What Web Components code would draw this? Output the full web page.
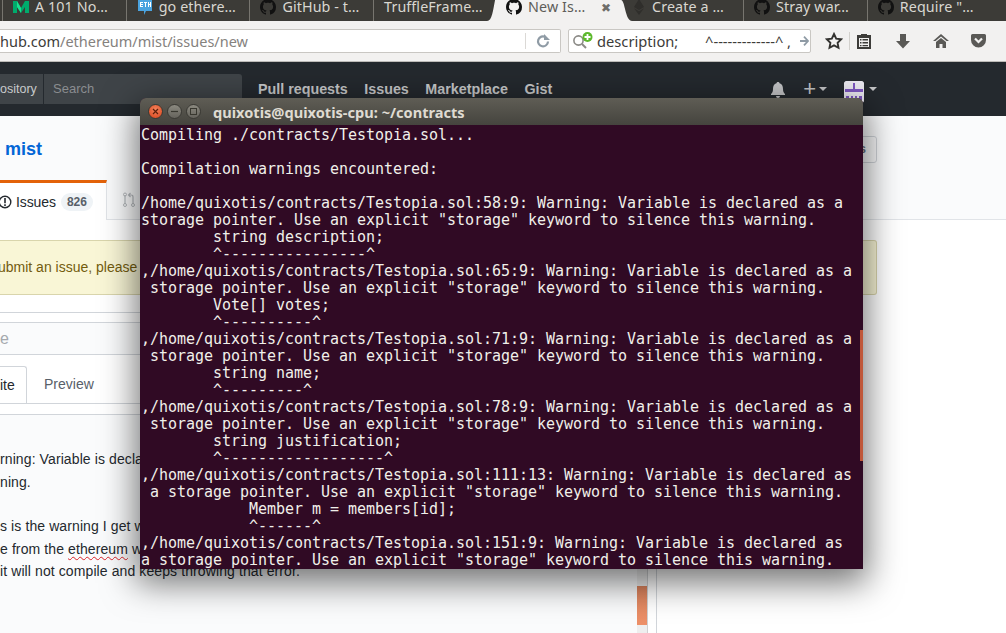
<!DOCTYPE html>
<html>
<head>
<meta charset="utf-8">
<style>
    html, body { margin: 0; height: 633px; overflow: hidden; background: #fff; }
    body { position: relative; font-family: "Liberation Sans", sans-serif; }
</style>
</head>
<body>
<browser-tabs>
    <browser-tab icon="medium">A 101 No…</browser-tab>
    <browser-tab icon="eth">go ethere…</browser-tab>
    <browser-tab icon="github">GitHub - t…</browser-tab>
    <browser-tab class="short">TruffleFrame…</browser-tab>
    <browser-tab icon="github" active>New Is…</browser-tab>
    <browser-tab icon="diamond" class="after">Create a …</browser-tab>
    <browser-tab icon="github">Stray war…</browser-tab>
    <browser-tab icon="github">Require "…</browser-tab>
</browser-tabs>
<nav-toolbar></nav-toolbar>
<gh-header></gh-header>
<gh-repohead></gh-repohead>
<issue-form></issue-form>
<terminal-window></terminal-window>

<script>
const OCTOCAT = 'M8 0C3.58 0 0 3.58 0 8c0 3.54 2.29 6.53 5.47 7.59.4.07.55-.17.55-.38 0-.19-.01-.82-.01-1.49-2.01.37-2.53-.49-2.69-.94-.09-.23-.48-.94-.82-1.13-.28-.15-.68-.52-.01-.53.63-.01 1.08.58 1.23.82.72 1.21 1.87.87 2.33.66.07-.52.28-.87.51-1.07-1.78-.2-3.64-.89-3.64-3.95 0-.87.31-1.59.82-2.15-.08-.2-.36-1.02.08-2.12 0 0 .67-.21 2.2.82.64-.18 1.32-.27 2-.27.68 0 1.36.09 2 .27 1.53-1.04 2.2-.82 2.2-.82.44 1.1.16 1.92.08 2.12.51.56.82 1.27.82 2.15 0 3.07-1.87 3.75-3.65 3.95.29.25.54.73.54 1.48 0 1.07-.01 1.93-.01 2.2 0 .21.15.46.55.38A8.013 8.013 0 0 0 16 8c0-4.42-3.58-8-8-8z';

const TAB_ICONS = {
    medium: `<svg width="16" height="16" viewBox="0 0 16 16"><path fill="#00ab6c" d="M0 2h4l4 7 4-7h4v12h-4V8l-4 6-4-6v6H0z"/><path fill="#1be08f" d="M4 2l4 7v5L4 8z"/></svg>`,
    eth: `<svg width="16" height="18" viewBox="0 0 16 18"><path fill="#4aa3df" d="M1 0h14v13H9l-2 4v-4H1z"/><path fill="#fff" d="M3 4h3v1H4v1h2v1H4v1h2v1H3zM7 4h3v1H9v4H8V5H7zM11 4h1v2h1V4h1v5h-1V7h-1v2h-1z"/></svg>`,
    github: `<svg width="16" height="16" viewBox="0 0 16 16"><path fill="#111" d="${OCTOCAT}"/></svg>`,
    diamond: `<svg width="14" height="16" viewBox="0 0 14 16"><path fill="#2f2e2b" d="M7 0l5 8-5 3-5-3zM7 12.2L12 9.2 7 16 2 9.2z"/></svg>`
};

class BrowserTabs extends HTMLElement {

    constructor() {
        super();
        this.shadow = this.attachShadow({ mode: 'open' });
    }

    connectedCallback() {
        this.shadow.innerHTML = `
        <style>
            :host { display: flex; height: 21px; padding-left: 2px; background: #3c3b37; overflow: hidden; }
        </style>
        <slot></slot>`;
    }
}

class BrowserTab extends HTMLElement {

    constructor() {
        super();
        this.shadow = this.attachShadow({ mode: 'open' });
    }

    connectedCallback() {
        const icon = TAB_ICONS[this.getAttribute('icon')] || '';
        const close = this.hasAttribute('active') ? '<span class="close">✖</span>' : '';
        this.shadow.innerHTML = `
        <style>
            :host {
                display: flex; align-items: center; gap: 6px; box-sizing: border-box;
                width: 123.7px; height: 21px; padding: 0 0 8px 10px; flex: none;
                border-left: 1px solid #77756f; overflow: hidden;
                font: 14.3px "Noto Sans", sans-serif; letter-spacing: .1px; color: #d9d7d1; white-space: nowrap;
            }
            :host(.short) { width: 114px; }
            :host([active]) {
                width: 145px; padding-left: 19px; border-left: 0; color: #5e5d59; background: #f2f1f0;
                clip-path: path('M8 0 H134 C138 0 138 21 145 21 H0 C5 21 6 10 8 0Z');
            }
            :host(.after) { width: 111px; padding-left: 0; border-left: 0; }
            svg { flex: none; display: block; }
            .close { position: absolute; left: 601px; top: -1px; font-size: 12px; color: #6e6d69; }
        </style>
        ${icon}<span><slot></slot></span>${close}`;
    }
}

class NavToolbar extends HTMLElement {

    constructor() {
        super();
        this.shadow = this.attachShadow({ mode: 'open' });
    }

    connectedCallback() {
        this.shadow.innerHTML = `
        <style>
            :host {
                display: flex; align-items: center; box-sizing: border-box; height: 41px; padding: 0 0 1px 0;
                background: #f2f1f0; border-bottom: 1px solid #bdbbb8;
                font: 14.5px "Noto Sans", sans-serif; color: #3d3c39;
            }
            .url, .search {
                display: flex; align-items: center; box-sizing: border-box; height: 24px;
                background: #fff; border: 1px solid #c9c7c3; white-space: nowrap;
            }
            .url { width: 561px; border-left: 0; border-radius: 0 2px 2px 0; }
            .url .address { flex: 1; overflow: hidden; }
            .url .path { color: #85827e; }
            .url .reload { width: 33px; height: 16px; border-left: 1px solid #dbd9d6; display: flex; justify-content: center; margin-right: 1px; }
            .search { width: 243px; margin-left: 7px; border-radius: 2px; gap: 4px; }
            .search .query { flex: 1; overflow: hidden; white-space: pre; font-size: 14.7px; }
            .star { width: 26px; margin-left: 10px; display: flex; justify-content: center; }
            .divider { width: 1px; height: 18px; margin-left: 2px; background: #d3d1cd; }
            .action { width: 30px; margin-right: 8px; display: flex; justify-content: center; }
            svg { display: block; flex: none; }
        </style>
        <div class="url">
            <div class="address">hub.com<span class="path">/ethereum/mist/issues/new</span></div>
            <div class="reload"><svg width="16" height="16" viewBox="0 0 16 16"><path fill="none" stroke="#8f9ba5" stroke-width="2.2" d="M13 8.5A5 5 0 1 1 10.5 4"/><path fill="#8f9ba5" d="M9 1v6h6z"/></svg></div>
        </div>
        <div class="search">
            <svg width="22" height="20" viewBox="0 0 22 20" style="margin-left:2px"><circle cx="7.5" cy="9.5" r="4.6" fill="none" stroke="#8b8a86" stroke-width="1.6"/><path stroke="#8b8a86" stroke-width="2" d="M11 13l4 4"/><circle cx="16.5" cy="6" r="5" fill="#5cb82c"/><path stroke="#fff" stroke-width="1.8" d="M16.5 3v6M13.5 6h6"/></svg>
            <div class="query">description;       ^-------------^ ,</div>
            <svg width="9" height="10" viewBox="0 0 9 10" style="margin-right:1px"><path fill="none" stroke="#8f9ba5" stroke-width="1.8" d="M4 .7L8 5 4 9.300M0 5h7.500"/></svg>
        </div>
        <div class="star"><svg width="18" height="18" viewBox="0 0 18 18"><path fill="none" stroke="#33322f" stroke-width="1.9" d="M9 2l2.200 4.600 5 .7-3.600 3.500.9 5L9 13.400l-4.500 2.400.9-5L1.800 7.300l5-.7z"/></svg></div>
        <div class="divider"></div>
        <div class="action"><svg width="16" height="16" viewBox="0 0 16 16" style="margin-left:-2px"><path fill="#3d3c39" d="M1 2h4V1h6v1h4v14H1z"/><path fill="#f2f1f0" d="M3 5h10v9H3z"/><path fill="#3d3c39" d="M4 6h1.500v1.500H4zM6.500 6H12v1.500H6.500zM4 9h1.500v1.500H4zM6.500 9H12v1.500H6.500zM4 12h1.500v1.200H4zM6.500 12H12v1.200H6.500z"/></svg></div>
        <div class="action"><svg width="16" height="16" viewBox="0 0 16 16"><path fill="#5a5956" d="M5 1h6v7h4l-7 7.500L1 8h4z"/></svg></div>
        <div class="action"><svg width="18" height="16" viewBox="0 0 18 16"><path fill="#5a5956" d="M9 1l8 7h-2.500L9 3.500 3.500 8H1zM4 9l5-4 5 4v6h-3.500v-4h-3v4H4z"/></svg></div>
        <div class="action"><svg width="17" height="16" viewBox="0 0 17 16" style="margin-left:-2px"><path fill="#5a5956" d="M2.500 1h12A1.500 1.500 0 0 1 16 2.500V7A7.500 7.500 0 0 1 1 7V2.500A1.500 1.500 0 0 1 2.500 1z"/><path fill="none" stroke="#f2f1f0" stroke-width="2.2" d="M5 5.500L8.500 9 12 5.500"/></svg></div>`;
    }
}

class GhHeader extends HTMLElement {

    constructor() {
        super();
        this.shadow = this.attachShadow({ mode: 'open' });
    }

    connectedCallback() {
        this.shadow.innerHTML = `
        <style>
            :host {
                display: flex; align-items: flex-start; box-sizing: border-box; height: 54px; padding-top: 12px;
                background: #24292e; font: 14px "Liberation Sans", sans-serif; color: rgba(255,255,255,.75);
            }
            .search { display: flex; width: 242px; height: 30px; line-height: 30px; background: #3f4448; border-radius: 0 3px 3px 0; font-size: 13px; }
            .scope { width: 44px; box-sizing: border-box; padding-right: 9px; text-align: right; overflow: hidden; white-space: nowrap; border-right: 1px solid #24292e; color: #c8cacb; font-size: 12.5px; }
            .hint { padding-left: 9px; color: #8a8d90; }
            .links { display: flex; gap: 16.5px; margin-left: 16px; font-size: 14.3px; font-weight: bold; line-height: 31px; }
            .user { display: flex; align-items: center; margin-left: 218px; height: 29px; }
            .caret { width: 0; height: 0; border: 4px solid transparent; border-top-color: #c5c6c8; border-bottom: 0; }
            .plus { font-size: 22px; font-weight: normal; margin-left: 17px; margin-right: 3px; line-height: 20px; color: #c5c6c8; }
            .avatar { margin: 6px 5px 0 17px; width: 20px; height: 22px; background: #e8e6f0; border-radius: 3px; }
            svg { display: block; }
        </style>
        <div class="search"><div class="scope">ository</div><div class="hint">Search</div></div>
        <div class="links"><span>Pull requests</span><span>Issues</span><span>Marketplace</span><span>Gist</span></div>
        <div class="user">
            <svg width="16" height="18" viewBox="0 0 16 18" style="margin-top:3px"><path fill="#c5c6c8" d="M8 1c1 0 1.500.6 1.500 1.300C12 3 13 5 13 8c0 3 1 4 2 5v1H1v-1c1-1 2-2 2-5 0-3 1-5 3.500-5.700C6.500 1.600 7 1 8 1zM6 15h4a2 2 0 0 1-4 0z"/></svg>
            <span class="plus">+</span><span class="caret"></span>
            <svg class="avatar" viewBox="0 0 20 22"><rect width="20" height="22" rx="3" fill="#eceaf2"/><path fill="#7e57c2" d="M9 2h2v7H9zM1 8h18v3H1zM2 15h3v4H2zM7 15h2v4H7zM11 15h2v4h-2zM15 15h3v4h-3z"/></svg>
            <span class="caret"></span>
        </div>`;
    }
}

class GhRepohead extends HTMLElement {

    constructor() {
        super();
        this.shadow = this.attachShadow({ mode: 'open' });
    }

    connectedCallback() {
        this.shadow.innerHTML = `
        <style>
            :host {
                display: block; box-sizing: border-box; height: 104px; padding-top: 20px;
                background: #fafbfc; border-bottom: 1px solid #e1e4e8; font: 14px "Liberation Sans", sans-serif;
            }
            .title { display: flex; justify-content: space-between; height: 27px; width: 877px; margin-bottom: 17px; }
            .name { margin-left: 5px; font-size: 18px; font-weight: bold; line-height: 27px; color: #0366d6; }
            .button { box-sizing: border-box; width: 40px; height: 27px; line-height: 25px; padding-right: 10px; text-align: right; border: 1px solid #d1d5da; border-radius: 3px; font-size: 12px; font-weight: bold; color: #6a737d; }
            .tabs { display: flex; height: 39px; }
            .issues {
                display: flex; align-items: center; gap: 4px; box-sizing: border-box; width: 107px; height: 40px;
                background: #fff; border-top: 3px solid #e36209; border-right: 1px solid #e1e4e8; color: #24292e;
            }
            .issues .label { letter-spacing: -.1px; }
            .count { padding: 2px 6px; margin-left: 1px; background: #eff3f6; border-radius: 20px; font-size: 12px; font-weight: bold; color: #586069; line-height: 14px; }
            .pulls { margin: 12px 0 0 16px; }
            svg { display: block; flex: none; }
        </style>
        <div class="title"><div class="name">mist</div><div class="button">s</div></div>
        <div class="tabs">
            <div class="issues">
                <svg width="14" height="14" viewBox="0 0 14 14" style="margin-left:-2px"><circle cx="7" cy="7" r="5.8" fill="none" stroke="#24292e" stroke-width="1.4"/><path fill="#24292e" d="M6.200 3h1.600v5.200H6.200zM6.200 9.200h1.600V11H6.200z"/></svg>
                <span class="label">Issues</span><span class="count">826</span>
            </div>
            <svg class="pulls" width="12" height="15" viewBox="0 0 12 15"><path fill="none" stroke="#b5b9bd" stroke-width="1.2" d="M2 3v9M10 12V5Q10 3 8 3H6M7.500 1L5.500 3l2 2"/><circle cx="2" cy="2.500" r="1.500" fill="none" stroke="#b5b9bd"/><circle cx="2" cy="13" r="1.500" fill="none" stroke="#b5b9bd"/><circle cx="10" cy="13" r="1.500" fill="none" stroke="#b5b9bd"/></svg>
        </div>`;
    }
}

class IssueForm extends HTMLElement {

    constructor() {
        super();
        this.shadow = this.attachShadow({ mode: 'open' });
    }

    connectedCallback() {
        this.shadow.innerHTML = `
        <style>
            :host { display: block; padding-top: 20px; font: 14px "Liberation Sans", sans-serif; color: #24292e; }
            .flash {
                box-sizing: border-box; width: 877px; height: 55px; line-height: 53px;
                background: #f9f6d6; border: 1px solid #d9d5ac; border-left: 0; border-radius: 0 3px 3px 0; color: #735c0f; text-indent: -2px; white-space: nowrap;
            }
            .box { box-sizing: border-box; width: 657px; margin-top: 17px; padding: 9px 8px 0 0; border-top: 1px solid #d1d5da; border-right: 1px solid #d1d5da; height: 321px; }
            .title { box-sizing: border-box; height: 33px; line-height: 31px; background: #fafbfc; border: 1px solid #d1d5da; border-left: 0; color: #a5a9ae; font-size: 16px; }
            .tabs { display: flex; height: 37px; margin-top: 11px; border-bottom: 1px solid #d1d5da; }
            .write { box-sizing: border-box; width: 27px; height: 37px; line-height: 37px; background: #fff; border: 1px solid #d1d5da; border-width: 1px 1px 0 0; border-radius: 0 3px 0 0; text-align: right; padding-right: 12px; overflow: hidden; }
            .preview { margin-left: 17px; line-height: 37px; color: #586069; }
            .editor { display: flex; box-sizing: border-box; height: 220px; margin-top: 10px; background: #fafbfc; border-top: 1px solid #d1d5da; }
            .text { flex: 1; padding-top: 33.2px; line-height: 22.4px; letter-spacing: .1px; white-space: nowrap; min-width: 0; }
            .text p { margin: 0; height: 22.4px; }
            .text p.gap { margin-top: 22.2px; }
            .typo { text-decoration: underline wavy #d8232a 1px; text-underline-offset: 2px; }
            .track { flex: none; width: 11px; box-sizing: border-box; background: #eeeeee; border-right: 1px solid #cfd1d3; }
            .thumb { height: 39px; margin-top: 171px; background: linear-gradient(#d9825c, #ee9169); }
        </style>
        <div class="flash">ubmit an issue, please</div>
        <div class="box">
            <div class="title">e</div>
            <div class="tabs"><div class="write">ite</div><div class="preview">Preview</div></div>
            <div class="editor">
                <div class="text">
                    <p>rning: Variable is decla</p>
                    <p>ning.</p>
                    <p class="gap">s is the warning I get w</p>
                    <p>e from the <span class="typo">ethereum</span> w</p>
                    <p>it will not compile and keeps throwing that error.</p>
                </div>
                <div class="track"><div class="thumb"></div></div>
            </div>
        </div>`;
    }
}

const WARNING_TAIL = ' storage pointer. Use an explicit "storage" keyword to silence this warning.';
const TERMINAL_TEXT = [
    'Compiling ./contracts/Testopia.sol...',
    '',
    'Compilation warnings encountered:',
    '',
    '/home/quixotis/contracts/Testopia.sol:58:9: Warning: Variable is declared as a',
    WARNING_TAIL.trim(),
    '        string description;',
    '        ^----------------^',
    ',/home/quixotis/contracts/Testopia.sol:65:9: Warning: Variable is declared as a',
    WARNING_TAIL,
    '        Vote[] votes;',
    '        ^----------^',
    ',/home/quixotis/contracts/Testopia.sol:71:9: Warning: Variable is declared as a',
    WARNING_TAIL,
    '        string name;',
    '        ^---------^',
    ',/home/quixotis/contracts/Testopia.sol:78:9: Warning: Variable is declared as a',
    WARNING_TAIL,
    '        string justification;',
    '        ^------------------^',
    ',/home/quixotis/contracts/Testopia.sol:111:13: Warning: Variable is declared as',
    ' a storage pointer. Use an explicit "storage" keyword to silence this warning.',
    '            Member m = members[id];',
    '            ^------^',
    ',/home/quixotis/contracts/Testopia.sol:151:9: Warning: Variable is declared as',
    'a storage pointer. Use an explicit "storage" keyword to silence this warning.'
].join('\n');

class TerminalWindow extends HTMLElement {

    constructor() {
        super();
        this.shadow = this.attachShadow({ mode: 'open' });
    }

    connectedCallback() {
        this.shadow.innerHTML = `
        <style>
            :host {
                position: absolute; left: 140px; top: 98px; width: 723px; height: 471px;
                display: flex; flex-direction: column; overflow: visible; border-radius: 6px 6px 0 0;
                background: #300a24; box-shadow: 0 10px 34px 4px rgba(0,0,0,.55);
            }
            .bar {
                display: flex; align-items: center; flex: none; height: 27px; box-sizing: border-box; padding-left: 8px;
                background: linear-gradient(#5f5d55, #45443e); border-radius: 6px 6px 0 0;
                font: bold 14.6px "Noto Sans", sans-serif; color: #dfdbd2;
            }
            .btn { width: 15px; height: 15px; border-radius: 50%; margin-right: 4px; box-sizing: border-box; border: 1px solid #3a3934; background: linear-gradient(#8b8980, #65635c); display: flex; }
            .btn.close { background: radial-gradient(circle at 50% 35%, #f4835c, #d7431a); }
            .btn svg { margin: auto; display: block; }
            .title { margin-left: 8px; white-space: nowrap; }
            pre {
                flex: 1; margin: 0; padding: 2px 0 0 1px; overflow: hidden;
                font: 15px/17px "DejaVu Sans Mono", monospace; letter-spacing: -.03px; color: #f0f0ea;
            }
            .scroll { position: absolute; right: 0; top: 232px; width: 3px; height: 131px; background: #c0583a; }
        </style>
        <div class="bar">
            <span class="btn close"><svg width="7" height="7" viewBox="0 0 7 7"><path stroke="#5c1f0b" stroke-width="1.2" d="M1 1l5 5M6 1L1 6"/></svg></span>
            <span class="btn"><svg width="7" height="7" viewBox="0 0 7 7"><path stroke="#38372f" stroke-width="1.2" d="M0 3.500h7"/></svg></span>
            <span class="btn"><svg width="7" height="7" viewBox="0 0 7 7"><rect x=".5" y=".5" width="6" height="6" fill="none" stroke="#38372f"/></svg></span>
            <span class="title">quixotis@quixotis-cpu: ~/contracts</span>
        </div>
        <pre>${TERMINAL_TEXT}</pre>
        <div class="scroll"></div>`;
    }
}

customElements.define('browser-tabs', BrowserTabs);
customElements.define('browser-tab', BrowserTab);
customElements.define('nav-toolbar', NavToolbar);
customElements.define('gh-header', GhHeader);
customElements.define('gh-repohead', GhRepohead);
customElements.define('issue-form', IssueForm);
customElements.define('terminal-window', TerminalWindow);
</script>
</body>
</html>
